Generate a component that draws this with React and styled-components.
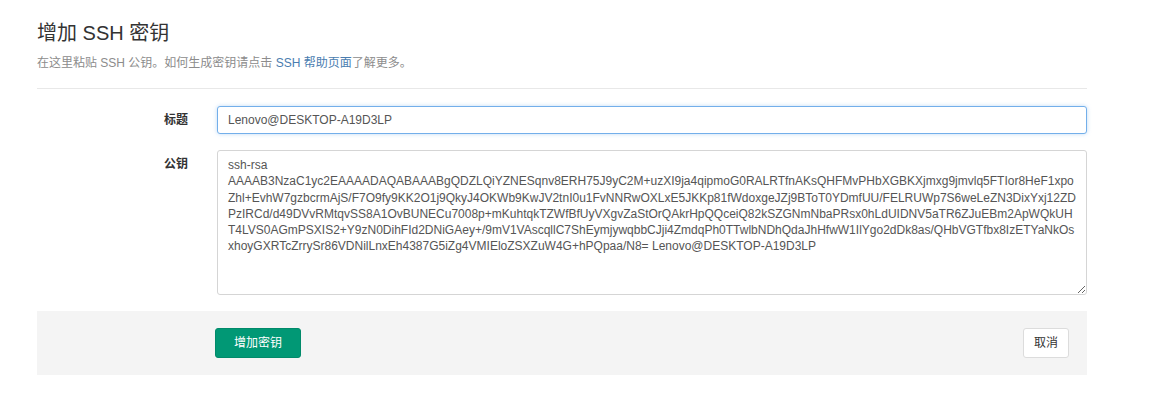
import React from "react";
import styled, { createGlobalStyle } from "styled-components";

const GlobalStyle = createGlobalStyle`
  html, body { margin: 0; padding: 0; background: #fff; }
  body {
    font-family: "Liberation Sans", Arial, "Noto Sans CJK SC", sans-serif;
    color: #333;
    font-size: 12px;
  }
  * { box-sizing: border-box; }
`;

const Page = styled.div`
  width: 1050px;
  margin-left: 37px;
  padding-top: 20px;
`;

const Title = styled.h3`
  margin: 0;
  font-size: 20px;
  line-height: 26px;
  font-weight: 400;
  color: #333;
`;

const Lead = styled.p`
  margin: 9px 0 0;
  font-size: 12px;
  line-height: 17px;
  color: #8c8c8c;
`;

const Link = styled.a`
  color: #4a7db0;
  text-decoration: none;
`;

const Divider = styled.hr`
  margin: 16px 0 0;
  border: 0;
  border-top: 1px solid #e8e8e8;
  height: 0;
`;

const Form = styled.form`
  margin-top: 17px;
  display: flex;
  flex-direction: column;
  gap: 16px;
`;

const Row = styled.div`
  display: grid;
  grid-template-columns: 151px 1fr;
  column-gap: 29px;
  align-items: start;
`;

const Label = styled.label`
  text-align: right;
  font-weight: 700;
  font-size: 12px;
  line-height: 16px;
  padding-top: 6px;
  color: #333;
`;

const Input = styled.input`
  height: 28px;
  width: 100%;
  padding: 0 10px;
  font-family: inherit;
  font-size: 12px;
  color: #555;
  background: #fff;
  border: 1px solid ${(p) => (p.$focused ? "#73afea" : "#d5d5d5")};
  border-radius: 3px;
  box-shadow: ${(p) =>
    p.$focused ? "0 0 4px rgba(115, 175, 234, 0.45)" : "none"};
  outline: none;
`;

const TextArea = styled.textarea`
  display: block;
  width: 100%;
  height: 145px;
  padding: 6px 10px;
  font-family: inherit;
  font-size: 12px;
  line-height: 16.3px;
  color: #555;
  background: #fff;
  border: 1px solid #d5d5d5;
  border-radius: 3px;
  resize: vertical;
  outline: none;
`;

const Footer = styled.div`
  margin-top: 16px;
  background: #f4f4f4;
  padding: 17px 18px 17px 178px;
  display: flex;
  justify-content: space-between;
  align-items: center;
`;

const Button = styled.button`
  height: 30px;
  padding: 0 ${(p) => (p.$primary ? "18px" : "10px")};
  font-family: inherit;
  font-size: 12px;
  line-height: 28px;
  border-radius: 3px;
  cursor: pointer;
  color: ${(p) => (p.$primary ? "#fff" : "#333")};
  background: ${(p) => (p.$primary ? "#019875" : "#fff")};
  border: 1px solid ${(p) => (p.$primary ? "#018a6a" : "#dcdcdc")};
`;

const KEY =
  "ssh-rsa AAAAB3NzaC1yc2EAAAADAQABAAABgQDZLQiYZNESqnv8ERH75J9yC2M+uzXI9ja4qipmoG0RALRTfnAKsQHFMvPHbXGBKXjmxg9jmvlq5FTIor8HeF1xpoZhl+EvhW7gzbcrmAjS/F7O9fy9KK2O1j9QkyJ4OKWb9KwJV2tnI0u1FvNNRwOXLxE5JKKp81fWdoxgeJZj9BToT0YDmfUU/FELRUWp7S6weLeZN3DixYxj12ZDPzIRCd/d49DVvRMtqvSS8A1OvBUNECu7008p+mKuhtqkTZWfBfUyVXgvZaStOrQAkrHpQQceiQ82kSZGNmNbaPRsx0hLdUIDNV5aTR6ZJuEBm2ApWQkUHT4LVS0AGmPSXIS2+Y9zN0DihFId2DNiGAey+/9mV1VAscqllC7ShEymjywqbbCJji4ZmdqPh0TTwlbNDhQdaJhHfwW1IlYgo2dDk8as/QHbVGTfbx8IzETYaNkOsxhoyGXRTcZrrySr86VDNilLnxEh4387G5iZg4VMIEloZSXZuW4G+hPQpaa/N8= Lenovo@DESKTOP-A19D3LP";

export default function App() {
  return (
    <>
      <GlobalStyle />
      <Page>
        <Title>增加 SSH 密钥</Title>
        <Lead>
          在这里粘贴 SSH 公钥。如何生成密钥请点击 <Link href="#">SSH 帮助页面</Link>了解更多。
        </Lead>
        <Divider />
        <Form onSubmit={(e) => e.preventDefault()}>
          <Row>
            <Label htmlFor="title">标题</Label>
            <Input id="title" $focused defaultValue="Lenovo@DESKTOP-A19D3LP" />
          </Row>
          <Row>
            <Label htmlFor="key">公钥</Label>
            <TextArea id="key" defaultValue={KEY} spellCheck={false} />
          </Row>
        </Form>
        <Footer>
          <Button $primary type="button">增加密钥</Button>
          <Button type="button">取消</Button>
        </Footer>
      </Page>
    </>
  );
}
